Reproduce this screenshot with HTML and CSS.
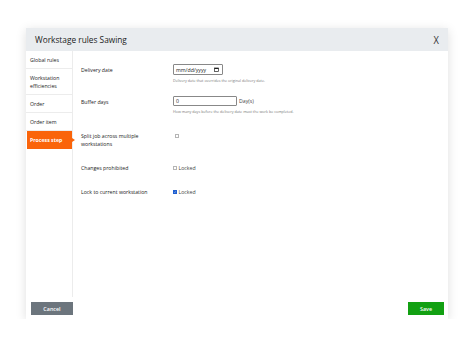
FILE: index.html
```html
<!DOCTYPE html>
<html lang="en">

<head>
    <meta charset="UTF-8">
    <title>Workstage rules</title>
    <link rel="stylesheet" href="styles.css">
</head>

<body>
    <div class="dialog">
        <div class="dialog-header">
            <h1>Workstage rules Sawing</h1>
            <span class="close">X</span>
        </div>
        <div class="dialog-body">
            <nav class="sidebar">
                <a class="tab">Global rules</a>
                <a class="tab">Workstation efficiencies</a>
                <a class="tab">Order</a>
                <a class="tab">Order item</a>
                <a class="tab active">Process step</a>
            </nav>
            <section class="content">
                <div class="row row-date">
                    <label>Delivery date</label>
                    <div class="field">
                        <div class="date-input">mm/dd/yyyy
                            <svg width="5" height="5" viewBox="0 0 10 10"><rect x="1" y="2" width="8" height="7" fill="none" stroke="#222" stroke-width="1.4"/><rect x="1" y="2" width="8" height="2" fill="#222"/></svg>
                        </div>
                        <p class="help">Delivery date that overrides the original delivery date.</p>
                    </div>
                </div>
                <div class="row row-buffer">
                    <label>Buffer days</label>
                    <div class="field">
                        <div class="inline"><div class="text-input">0</div><span class="unit">Day(s)</span></div>
                        <p class="help">How many days before the delivery date must the work be completed.</p>
                    </div>
                </div>
                <div class="row row-split">
                    <label>Split job across multiple workstations</label>
                    <div class="field"><span class="check"></span></div>
                </div>
                <div class="row row-changes">
                    <label>Changes prohibited</label>
                    <div class="field"><span class="check"></span><span class="unit">Locked</span></div>
                </div>
                <div class="row row-lock">
                    <label>Lock to current workstation</label>
                    <div class="field"><span class="check checked">
                        <svg width="4" height="4" viewBox="0 0 10 10"><path d="M1.5 5 L4 7.8 L8.5 2" fill="none" stroke="#fff" stroke-width="2.2"/></svg>
                    </span><span class="unit">Locked</span></div>
                </div>
            </section>
        </div>
        <div class="dialog-footer">
            <button class="btn cancel">Cancel</button>
            <button class="btn save">Save</button>
        </div>
    </div>
</body></html>
```

FILE: styles.css
```css
* {
    box-sizing: border-box;
}

body {
    margin: 0;
    background-color: #fff;
    font-family: 'Open Sans', sans-serif;
    color: #222;
}

.dialog {
    width: 422px;
    height: 291px;
    margin: 28px 0 0 26px;
    display: flex;
    flex-direction: column;
    background-color: #fff;
    box-shadow: 0 2px 10px rgba(0, 0, 0, 0.13);
}

.dialog-header {
    height: 23px;
    background-color: #e9ecef;
    display: flex;
    align-items: center;
    justify-content: space-between;
    padding: 0 9px 0 9px;
}

h1 {
    margin: 0;
    font-size: 8.3px;
    font-weight: 400;
    color: #222;
}

.close {
    font-size: 11px;
    color: #333;
    transform: scaleX(0.85);
}

.dialog-body {
    flex: 1;
    display: flex;
}

.sidebar {
    width: 47px;
    border-right: 1px solid #ececec;
    display: flex;
    flex-direction: column;
}

.tab {
    font-size: 5.2px;
    line-height: 8px;
    padding: 4.5px 4px;
    border-bottom: 1px solid #ececec;
    color: #222;
}

.tab.active {
    position: relative;
    background-color: #fa640a;
    color: #fff;
    font-weight: 700;
    border-bottom: none;
    margin-left: 1px;
    padding: 5px 3px;
}

.tab.active::after {
    content: "";
    position: absolute;
    right: -3px;
    top: 7px;
    border-left: 3px solid #fa640a;
    border-top: 2px solid transparent;
    border-bottom: 2px solid transparent;
}

.content {
    flex: 1;
    padding: 13px 0 0 8px;
}

.row {
    display: grid;
    grid-template-columns: 92px 1fr;
    align-items: start;
}

label {
    font-size: 5.2px;
    line-height: 8px;
    padding-top: 1.5px;
    width: 70px;
}

.row-date { margin-bottom: 13px; }
.row-buffer { margin-bottom: 18px; }
.row-split { margin-bottom: 14px; }
.row-split label { padding-top: 0; }
.row-changes { margin-bottom: 14px; }

.date-input {
    width: 50px;
    height: 11px;
    border: 1px solid #888;
    border-radius: 1px;
    font-size: 5.2px;
    display: flex;
    align-items: center;
    justify-content: space-between;
    padding: 0 3px 0 2px;
}

.date-input svg {
    display: block;
}

.inline {
    display: flex;
    align-items: center;
}

.text-input {
    width: 64px;
    height: 10px;
    border: 1px solid #888;
    border-radius: 1px;
    font-size: 5.2px;
    line-height: 8px;
    padding-left: 2px;
}

.unit {
    font-size: 5.2px;
    margin-left: 2px;
    color: #444;
}

.help {
    margin: 3px 0 0 0;
    font-size: 3.7px;
    color: #777;
}

.field {
    display: flex;
    flex-direction: column;
    align-items: flex-start;
}

.row-changes .field,
.row-lock .field {
    flex-direction: row;
    align-items: center;
    padding-top: 2px;
}

.row-split .field {
    padding: 2px 0 0 2px;
}

.check {
    width: 4px;
    height: 4px;
    border: 1px solid #b5b5b5;
    display: flex;
    align-items: center;
    justify-content: center;
}

.check.checked {
    background-color: #1f5fd0;
    border-color: #1f5fd0;
}

.check svg {
    display: block;
}

.row-changes .unit,
.row-lock .unit {
    margin-left: 1.5px;
}

.dialog-footer {
    height: 22px;
    display: flex;
    justify-content: space-between;
    align-items: flex-start;
    padding: 5px 4px 0 5px;
}

.btn {
    height: 13px;
    border: none;
    border-radius: 0;
    font-family: 'Open Sans', sans-serif;
    font-size: 5.4px;
    font-weight: 600;
    color: #fff;
    padding: 0;
}

.cancel {
    width: 42px;
    background-color: #6c757d;
}

.save {
    width: 36px;
    background-color: #12a012;
}
```
